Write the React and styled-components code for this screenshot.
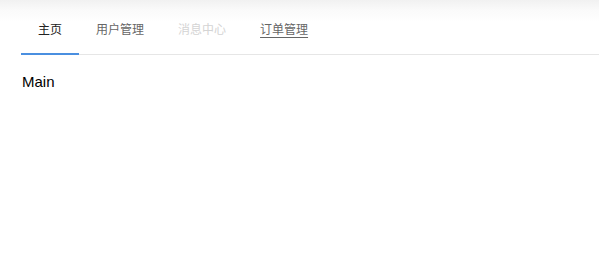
import React, { useState } from "react";
import styled, { createGlobalStyle } from "styled-components";

const Global = createGlobalStyle`
  html, body { margin: 0; padding: 0; background: #fff; }
  body { font-family: "Liberation Sans", "Noto Sans CJK SC", sans-serif; }
`;

const Page = styled.div`
  min-height: 257px;
  padding-left: 21px;
  background: linear-gradient(to bottom, #f1f1f1 0px, #fafafa 10px, #ffffff 22px);
`;

const TabBar = styled.nav`
  display: flex;
  height: 55px;
  box-sizing: border-box;
  border-bottom: 1px solid #e6e6e6;
`;

const Tab = styled.div`
  position: relative;
  height: 55px;
  box-sizing: border-box;
  padding: 19px 17px 0;
  font-family: "Noto Sans CJK SC", sans-serif;
  font-size: 12px;
  line-height: 20px;
  color: ${({ $active, $disabled }) => ($disabled ? "#d4d4d4" : $active ? "#222" : "#666")};
  text-decoration: ${({ $hover }) => ($hover ? "underline" : "none")};
  text-underline-offset: 3px;
  cursor: ${({ $disabled }) => ($disabled ? "not-allowed" : "pointer")};

  &::after {
    content: "";
    display: ${({ $active }) => ($active ? "block" : "none")};
    position: absolute;
    left: 0;
    right: 0;
    bottom: 0;
    height: 2px;
    background: #4a8fe0;
  }
`;

const Content = styled.main`
  padding-top: 17px;
  padding-left: 1px;
  font-size: 15px;
  line-height: 20px;
  color: #000;
`;

const tabs = [
  { key: "home", label: "主页" },
  { key: "users", label: "用户管理" },
  { key: "msg", label: "消息中心", disabled: true },
  { key: "orders", label: "订单管理", hover: true },
];

export default function App() {
  const [active, setActive] = useState("home");
  return (
    <>
      <Global />
      <Page>
        <TabBar>
          {tabs.map((t) => (
            <Tab
              key={t.key}
              $active={active === t.key}
              $disabled={t.disabled}
              $hover={t.hover}
              onClick={() => !t.disabled && setActive(t.key)}
            >
              {t.label}
            </Tab>
          ))}
        </TabBar>
        <Content>Main</Content>
      </Page>
    </>
  );
}
